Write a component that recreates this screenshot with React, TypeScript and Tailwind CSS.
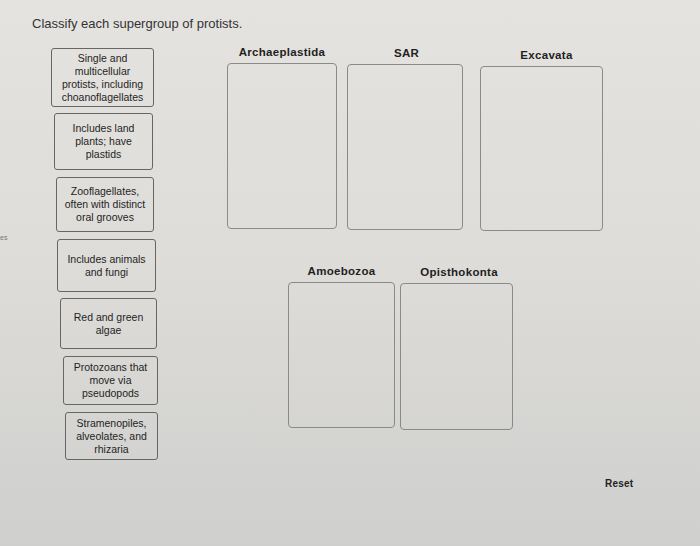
import React from "react";

const cards = [
    { text: ["Single and", "multicellular", "protists, including", "choanoflagellates"], cls: "ml-[19px] w-[103px] h-[59px] mt-[2px]" },
    { text: ["Includes land", "plants; have", "plastids"], cls: "ml-[22px] w-[99px] h-[57px] mt-[6px]" },
    { text: ["Zooflagellates,", "often with distinct", "oral grooves"], cls: "ml-[24px] w-[98px] h-[55px] mt-[7px]" },
    { text: ["Includes animals", "and fungi"], cls: "ml-[25px] w-[99px] h-[53px] mt-[7px]" },
    { text: ["Red and green", "algae"], cls: "ml-[28px] w-[97px] h-[51px] mt-[6px]" },
    { text: ["Protozoans that", "move via", "pseudopods"], cls: "ml-[31px] w-[95px] h-[49px] mt-[7px]" },
    { text: ["Stramenopiles,", "alveolates, and", "rhizaria"], cls: "ml-[33px] w-[93px] h-[48px] mt-[7px]" },
];

const Bin: React.FC<{ label: string; cls: string; box: string; labelCls?: string }> = ({ label, cls, box, labelCls }) => (
    <div className={`flex flex-col ${cls}`}>
        <div className={`h-[17px] text-center text-[11.5px] font-bold leading-[13px] tracking-[0.3px] text-[#1f1f1f] ${labelCls ?? ""}`}>{label}</div>
        <div className={`rounded-[4px] border border-[#8a8a88] ${box}`} />
    </div>
);

export default function App() {
    return (
        <div className="flex w-[700px] h-[546px] overflow-hidden bg-gradient-to-b from-[#e5e3df] via-[#dddcd9] to-[#cfcfcd] text-[#222]" style={{ fontFamily: '"Liberation Sans", Arial, sans-serif' }}>
            {/* cut-off side panel */}
            <div className="w-[32px] shrink-0">
                <div className="pt-[234px] text-[7px] leading-[8px] text-[#777]">es</div>
            </div>

            <div className="flex flex-col flex-1">
                <h1 className="mt-[16px] text-[13px] leading-[16px] text-[#333]">Classify each supergroup of protists.</h1>

                <div className="flex mt-[14px]">
                    {/* Draggable items */}
                    <div className="flex flex-col w-[127px] shrink-0">
                        {cards.map((c, i) => (
                            <div key={i} className={`flex flex-col items-center justify-center rounded-[3px] border border-[#666664] text-[10.5px] leading-[13px] text-center text-[#1f1f1f] ${c.cls}`}>
                                {c.text.map((t) => (
                                    <span key={t}>{t}</span>
                                ))}
                            </div>
                        ))}
                    </div>

                    {/* Bins */}
                    <div className="flex flex-col ml-[68px]">
                        <div className="flex items-start">
                            <Bin label="Archaeplastida" cls="w-[110px]" box="h-[166px]" />
                            <Bin label="SAR" cls="w-[116px] ml-[10px] mt-[1px]" box="h-[166px]" labelCls="pl-[3px]" />
                            <Bin label="Excavata" cls="w-[123px] ml-[17px] mt-[3px]" box="h-[165px]" labelCls="pl-[10px]" />
                        </div>
                        <div className="flex items-start mt-[34px]">
                            <Bin label="Amoebozoa" cls="w-[107px] ml-[61px]" box="h-[146px]" />
                            <Bin label="Opisthokonta" cls="w-[113px] ml-[5px] mt-[1px]" box="h-[147px]" labelCls="pl-[5px]" />
                        </div>
                        <div className="ml-[378px] mt-[48px] text-[10px] font-bold leading-[12px] tracking-[0.2px] text-[#1f1f1f]">Reset</div>
                    </div>
                </div>
            </div>
        </div>
    );
}
